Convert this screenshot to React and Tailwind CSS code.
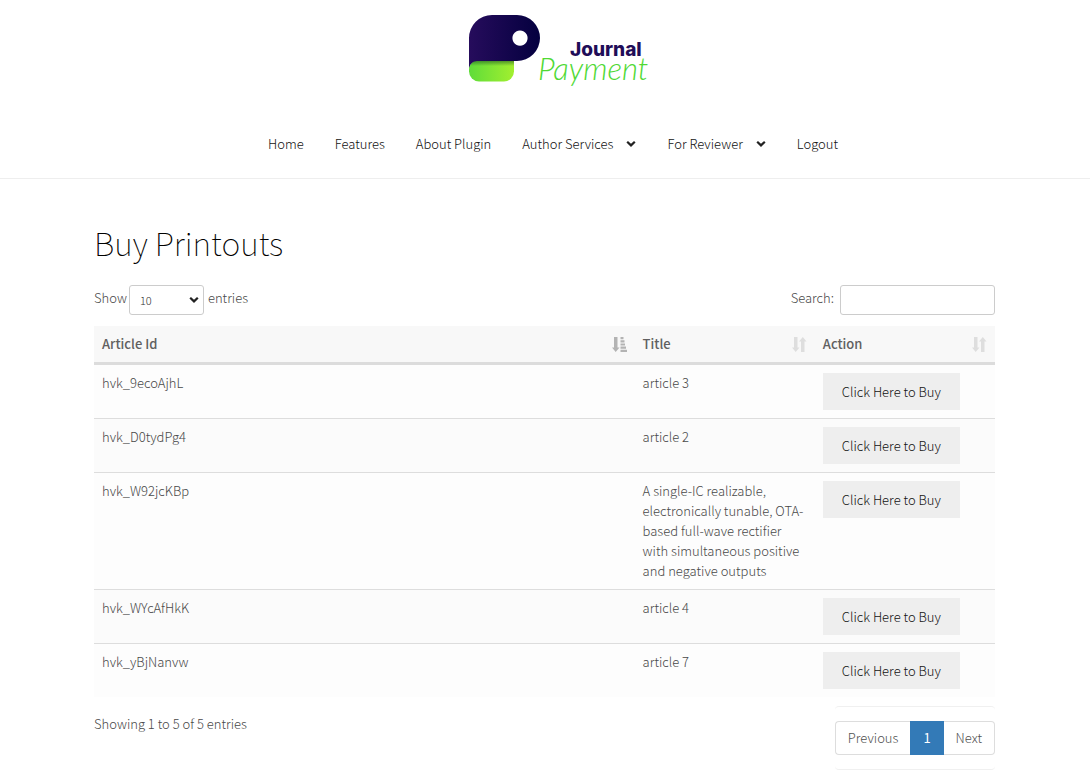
import React from "react";

const navItems = [
  { label: "Home" },
  { label: "Features" },
  { label: "About Plugin" },
  { label: "Author Services", menu: true },
  { label: "For Reviewer", menu: true },
  { label: "Logout" },
];

const articles = [
  { id: "hvk_9ecoAjhL", title: "article 3" },
  { id: "hvk_D0tydPg4", title: "article 2" },
  {
    id: "hvk_W92jcKBp",
    title:
      "A single-IC realizable, electronically tunable, OTA-based full-wave rectifier with simultaneous positive and negative outputs",
  },
  { id: "hvk_WYcAfHkK", title: "article 4" },
  { id: "hvk_yBjNanvw", title: "article 7" },
];

function Logo() {
  return (
    <svg width="182" height="76" viewBox="0 0 182 76" role="img" aria-label="Journal Payment">
      <defs>
        <linearGradient id="navy" x1="0" x2="1">
          <stop offset="0" stopColor="#260c5c" />
          <stop offset="1" stopColor="#04003f" />
        </linearGradient>
        <linearGradient id="lime" x1="0" x2="1">
          <stop offset="0" stopColor="#5fdc3a" />
          <stop offset="1" stopColor="#a2ef2f" />
        </linearGradient>
        <linearGradient id="shade" x1="0" x2="0" y1="0" y2="1">
          <stop offset="0" stopColor="#174a20" stopOpacity="0.65" />
          <stop offset="1" stopColor="#174a20" stopOpacity="0" />
        </linearGradient>
      </defs>
      <path d="M1 55a9 9 0 0 1 9-9H46V57.500a10 10 0 0 1-10 10H11a10 10 0 0 1-10-10Z" fill="url(#lime)" />
      <path d="M3 49.500Q5.500 46 10 46H46v6H3Z" fill="url(#shade)" />
      <path
        fillRule="evenodd"
        d="M24 1H49a23 23 0 0 1 0 46H9q-6 0-8 7V24A23 23 0 0 1 24 1Zm28 15.500a7.600 7.600 0 1 0 .01 0Z"
        fill="url(#navy)"
      />
      <text x="102" y="42" className="font-['Inter'] text-[19px] font-extrabold" fill="#1f0d58">
        Journal
      </text>
      <text x="70" y="66" className="font-['Lato'] text-[31px] font-light italic" fill="#4fd934">
        Payment
      </text>
    </svg>
  );
}

function Caret() {
  return (
    <svg width="10" height="8" viewBox="0 0 10 8" aria-hidden="true">
      <path d="M1.200 1.700 5 5.400 8.800 1.700" fill="none" stroke="#222" strokeWidth="2.200" />
    </svg>
  );
}

function SortIcon({ active }) {
  return (
    <svg
      width="15"
      height="15"
      viewBox="0 0 15 15"
      className={active ? "text-[#b3b3b3]" : "text-[#dedede]"}
      fill="currentColor"
      aria-hidden="true"
    >
      <path d="M2 0h3.500v10.500H7.500L3.700 15 0 10.500h2Z" />
      {active ? (
        <path d="M8.500 0h3v2.200h-3ZM8.500 3.200h4v2.200h-4ZM8.500 6.400h4.500v2.200H8.500ZM8.500 9.600h5.500v2.200H8.500ZM8.500 12.800h6.500V15H8.500Z" />
      ) : (
        <path d="M9 15h3.500V4.500H14.500L10.800 0 7 4.500H9Z" />
      )}
    </svg>
  );
}

function HeaderCell({ children, active, width }) {
  return (
    <th scope="col" className={`border-b-[3px] border-[#dcdcdc] px-2 py-0 text-left font-medium text-[#606060] ${width}`}>
      <div className="flex h-9 items-center justify-between">
        {children}
        <SortIcon active={active} />
      </div>
    </th>
  );
}

export default function App() {
  return (
    <div className="bg-white font-['Noto_Sans_CJK_SC',sans-serif] text-[13px] leading-5 font-light text-[#484848]">
      <header className="flex flex-col items-center border-b border-[#eeeeee] pt-3.5 pb-6">
        <a href="#home" className="ml-7">
          <Logo />
        </a>
        <nav aria-label="Main" className="mt-11 ml-4">
          <ul className="flex gap-[31px] text-[#111]">
            {navItems.map((item) => (
              <li key={item.label}>
                <a href="#nav" className="flex items-center gap-[13px] whitespace-nowrap">
                  {item.label}
                  {item.menu && <Caret />}
                </a>
              </li>
            ))}
          </ul>
        </nav>
      </header>

      <main className="mx-auto max-w-[1170px] pt-[38px] pr-[95px] pl-[94px]">
        <h1 className="text-[32px] leading-[50px] font-thin text-black">Buy Printouts</h1>

        <div className="mt-[18px] flex items-start justify-between">
          <div className="flex items-center gap-[2px]">
            <label htmlFor="length" className="pb-1">Show</label>
            <span className="relative flex items-center">
              <select
                id="length"
                defaultValue="10"
                className="h-[30px] w-[75px] appearance-none rounded-[3px] border border-[#ccc] bg-white pl-2.5 text-[11px] text-[#333]"
              >
                <option>10</option>
                <option>25</option>
                <option>50</option>
                <option>100</option>
              </select>
              <span className="pointer-events-none absolute right-[5px]">
                <Caret />
              </span>
            </span>
            <span className="pb-1 pl-0.5">entries</span>
          </div>
          <div className="flex items-center gap-1.5">
            <label htmlFor="search" className="pb-1">Search:</label>
            <input id="search" type="search" className="h-[30px] w-[155px] rounded-[3px] border border-[#ccc] bg-white px-2.5" />
          </div>
        </div>

        <table className="mt-[11px] w-full table-fixed border-separate border-spacing-0">
          <thead className="bg-[#f8f8f8]">
            <tr>
              <HeaderCell active width="w-[60%]">Article Id</HeaderCell>
              <HeaderCell width="w-[20%]">Title</HeaderCell>
              <HeaderCell width="w-[20%]">Action</HeaderCell>
            </tr>
          </thead>
          <tbody className="bg-[#fdfdfd] [&>tr:nth-child(even)]:bg-[#fbfbfb] [&>tr:not(:first-child)>td]:border-t [&>tr>td]:border-[#dddddd]">
            {articles.map((a) => (
              <tr key={a.id} className="align-top">
                <td className="p-2">{a.id}</td>
                <td className="p-2">{a.title}</td>
                <td className="p-2">
                  <button type="button" className="block h-[37px] bg-[#eeeeee] px-[19px] whitespace-nowrap text-[#111]">
                    Click Here to Buy
                  </button>
                </td>
              </tr>
            ))}
          </tbody>
        </table>

        <div className="flex items-start justify-between pt-[9px]">
          <p className="pt-2">Showing 1 to 5 of 5 entries</p>
          <ul className="flex rounded border-y border-[#f0f0f0] py-3.5">
            <li>
              <button type="button" className="h-[34px] rounded-l border border-r-0 border-[#ddd] px-3 text-[#505050]">Previous</button>
            </li>
            <li>
              <button type="button" aria-current="page" className="h-[34px] bg-[#337ab7] px-[13px] font-normal text-white">1</button>
            </li>
            <li>
              <button type="button" className="h-[34px] rounded-r border border-l-0 border-[#ddd] px-3 text-[#505050]">Next</button>
            </li>
          </ul>
        </div>
      </main>
    </div>
  );
}
